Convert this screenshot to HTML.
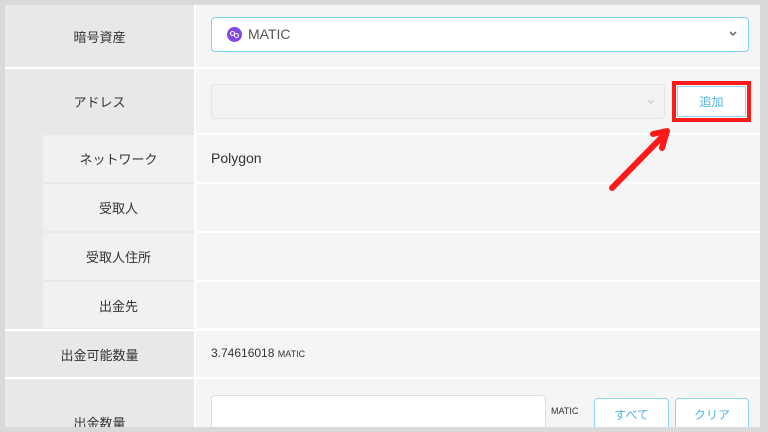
<!DOCTYPE html>
<html><head><meta charset="utf-8"><style>
*{margin:0;padding:0;box-sizing:border-box}
html,body{width:768px;height:432px;overflow:hidden}
body{background:#d9d9d9;position:relative;font-family:"Liberation Sans","Noto Sans CJK JP",sans-serif;}
.a{position:absolute}
.lab{position:absolute;background:#e8e8e8;display:flex;align-items:center;justify-content:center;font-size:13px;color:#333;}
.sub{background:#f1f1f1}
.val{position:absolute;background:#f5f5f5;}
</style></head><body>
<div class="a" style="left:5px;top:5px;width:755px;height:422px;background:#fff"></div>
<!-- row1 -->
<div class="lab" style="left:5px;top:5px;width:189px;height:62px">暗号資産</div>
<div class="val" style="left:196px;top:5px;width:564px;height:62px"></div>
<div class="a" style="left:211px;top:17px;width:538px;height:35px;background:#fff;border:1px solid #7fd3f3;border-radius:4px"></div>
<div class="a" style="left:227px;top:27px;width:15px;height:15px;border-radius:50%;background:#8247e5"></div>
<div class="a" style="left:230px;top:31px;width:5px;height:5px;border:1.3px solid #fff;border-radius:50%"></div>
<div class="a" style="left:234px;top:33px;width:5px;height:5px;border:1.3px solid #fff;border-radius:50%"></div>
<div class="a" style="left:248px;top:26px;font-size:14px;color:#555">MATIC</div>
<svg class="a" style="left:728px;top:30px" width="10" height="8"><path d="M2 2 L5 5 L8 2" stroke="#666" stroke-width="1.5" fill="none"/></svg>
<!-- row2 -->
<div class="a" style="left:5px;top:69px;width:189px;height:260px;background:#e8e8e8"></div>
<div class="lab" style="left:5px;top:69px;width:189px;height:64px">アドレス</div>
<div class="val" style="left:196px;top:69px;width:564px;height:64px"></div>
<div class="a" style="left:211px;top:84px;width:454px;height:35px;background:#f3f3f3;border:1px solid #e2e2e2;border-radius:4px"></div>
<svg class="a" style="left:646px;top:98px" width="10" height="8"><path d="M2 2 L5 5 L8 2" stroke="#ccc" stroke-width="1.3" fill="none"/></svg>
<div class="a" style="left:672px;top:81px;width:79px;height:41px;border:4px solid #ff1a1a"></div>
<div class="a" style="left:677px;top:86px;width:69px;height:31px;background:#fff;border:1px solid #8fd4f0;display:flex;align-items:center;justify-content:center;font-size:12px;color:#4fb3e8">追加</div>
<!-- sub rows -->
<div class="lab sub" style="left:43px;top:135px;width:151px;height:47px">ネットワーク</div>
<div class="val" style="left:196px;top:135px;width:564px;height:47px"></div>
<div class="a" style="left:211px;top:150px;font-size:14px;color:#333">Polygon</div>
<div class="lab sub" style="left:43px;top:184px;width:151px;height:47px">受取人</div>
<div class="val" style="left:196px;top:184px;width:564px;height:47px"></div>
<div class="lab sub" style="left:43px;top:233px;width:151px;height:47px">受取人住所</div>
<div class="val" style="left:196px;top:233px;width:564px;height:47px"></div>
<div class="lab sub" style="left:43px;top:282px;width:151px;height:46px">出金先</div>
<div class="val" style="left:196px;top:282px;width:564px;height:46px"></div>
<!-- row avail -->
<div class="lab" style="left:5px;top:331px;width:189px;height:46px">出金可能数量</div>
<div class="val" style="left:196px;top:331px;width:564px;height:46px"></div>
<div class="a" style="left:211px;top:346px;font-size:12px;color:#333">3.74616018 <span style="font-size:9px">MATIC</span></div>
<!-- row amount -->
<div class="lab" style="left:5px;top:379px;width:189px;height:48px"></div>
<div class="a" style="left:5px;top:413px;width:189px;text-align:center;font-size:13px;color:#333">出金数量</div>
<div class="val" style="left:196px;top:379px;width:564px;height:48px"></div>
<div class="a" style="left:211px;top:395px;width:335px;height:40px;background:#fff;border:1px solid #ddd;border-radius:4px"></div>
<div class="a" style="left:551px;top:406px;font-size:9px;color:#333">MATIC</div>
<div class="a" style="left:594px;top:398px;width:75px;height:33px;background:#fff;border:1.5px solid #8fd4f0;border-radius:4px;display:flex;align-items:center;justify-content:center;font-size:12px;color:#4fb3e8">すべて</div>
<div class="a" style="left:675px;top:398px;width:74px;height:33px;background:#fff;border:1.5px solid #8fd4f0;border-radius:4px;display:flex;align-items:center;justify-content:center;font-size:12px;color:#4fb3e8">クリア</div>
<div class="a" style="left:0;top:427px;width:768px;height:5px;background:#d9d9d9"></div>
<svg class="a" style="left:600px;top:125px" width="80" height="70"><path d="M12 63 L64 10" stroke="#ff1a1a" stroke-width="6" stroke-linecap="round"/><path d="M53 9 L67 6 L62 23" stroke="#ff1a1a" stroke-width="6" fill="none" stroke-linecap="round" stroke-linejoin="round"/></svg>
</body></html>
